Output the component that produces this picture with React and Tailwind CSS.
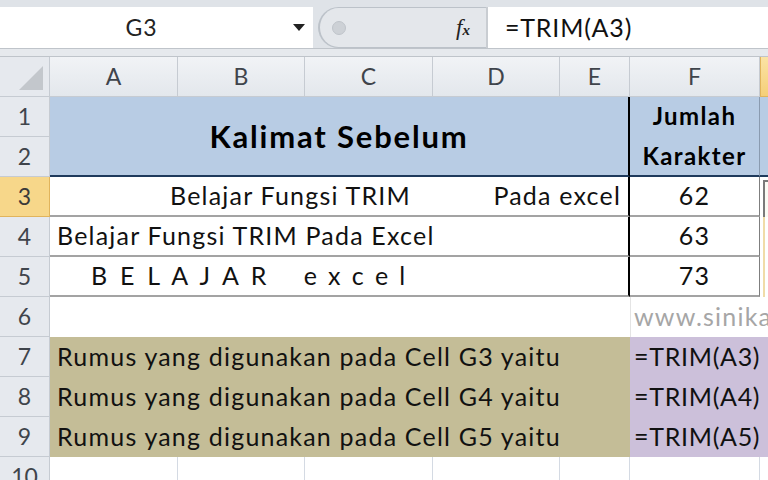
import React from "react";

const cell = "font-['Lato','Open_Sans',sans-serif]";

function RowHead({ n, active }) {
  return (
    <div
      className={
        active
          ? "flex items-center justify-center border-r border-b border-[#e1b45c] bg-[#f7d78a] text-[23px] text-[#3a3a3a]"
          : "flex items-center justify-center border-r border-b border-[#c6cbd2] bg-[#e6e9ee] text-[23px] text-[#3f444b]"
      }
    >
      {n}
    </div>
  );
}

function ColHead({ label, active }) {
  return (
    <div
      className={
        active
          ? "flex items-center justify-center border-l border-b border-[#e1b45c] bg-gradient-to-b from-[#fbe3a4] to-[#f5cf78]"
          : "flex items-center justify-center border-r border-b border-[#c6cbd2] bg-gradient-to-b from-[#f1f3f6] to-[#e3e7ec] text-[23px] text-[#3f444b]"
      }
    >
      {label}
    </div>
  );
}

export default function App() {
  return (
    <div className={`w-[768px] h-[480px] overflow-hidden bg-white ${cell}`}>
      {/* formula bar */}
      <div className="h-[57px] bg-[#dfe3e8] flex flex-col">
        <div className="h-[7px]" />
        <div className="h-[41px] flex">
          <div className="w-[313px] bg-white flex items-center relative">
            <span className="w-full text-center pr-[30px] text-[23px] tracking-[1px] text-[#222]">G3</span>
            <svg className="absolute left-[292px] top-[17px]" width="14" height="8" viewBox="0 0 14 8">
              <path d="M1 0 L13 0 L7 7 Z" fill="#222" />
            </svg>
          </div>
          <div className="w-[5px]" />
          <div className="w-[168px] flex items-center rounded-l-[22px] border-l-2 border-y border-[#bcc2c9] bg-[#e4e7eb]">
            <div className="ml-[12px] w-[14px] h-[14px] rounded-full bg-[#cdd1d6] border border-[#bfc4ca]" />
            <span className="ml-auto mr-[16px] font-['Liberation_Serif',serif] italic text-[23px] text-[#222] leading-none">
              f<span className="text-[15px] font-bold">x</span>
            </span>
          </div>
          <div className="w-[2px] bg-[#c9cdd2]" />
          <div className="flex-1 bg-white flex items-center pl-[17px] text-[25px] tracking-[0.8px] text-[#111]">=TRIM(A3)</div>
        </div>
        <div className="flex-1 border-t border-[#bfc4ca] border-b bg-[#e6e9ed]" />
      </div>

      {/* sheet */}
      <div className="grid grid-cols-[50px_128px_127px_128px_127px_70px_130px_1fr] grid-rows-[40px_repeat(10,40px)]">
        {/* column headers */}
        <div className="border-r border-b border-[#c6cbd2] bg-[#e6e9ee] flex items-end justify-end p-[6px]">
          <svg width="24" height="24" viewBox="0 0 24 24">
            <path d="M24 0 L24 24 L0 24 Z" fill="#c3c7cc" />
          </svg>
        </div>
        <ColHead label="A" />
        <ColHead label="B" />
        <ColHead label="C" />
        <ColHead label="D" />
        <ColHead label="E" />
        <ColHead label="F" />
        <ColHead label="" active />

        {/* rows 1-2 */}
        <RowHead n="1" />
        <div className="col-span-5 row-span-2 bg-[#b8cce4] border-r-2 border-r-black border-b-2 border-b-[#1f3a5c] flex items-center justify-center text-[31px] tracking-[1.8px] font-bold text-black">
          Kalimat Sebelum
        </div>
        <div className="row-span-2 bg-[#b8cce4] border-r border-r-[#8a9bb0] border-b-2 border-b-[#1f3a5c] flex flex-col items-center justify-center text-[24px] tracking-[1.4px] font-bold text-black leading-[40px]">
          <span>Jumlah</span>
          <span>Karakter</span>
        </div>
        <div className="row-span-2 bg-[#b8cce4] border-b-2 border-b-[#1f3a5c]" />
        <RowHead n="2" />

        {/* row 3 */}
        <RowHead n="3" active />
        <div className="col-span-5 border-r-2 border-r-black border-b-2 border-b-[#a3a3a3] flex items-center text-[25px] tracking-[1.2px] text-[#111] whitespace-pre">
          <span className="ml-[120px]">Belajar Fungsi TRIM</span>
          <span className="ml-auto mr-[7px]">Pada excel</span>
        </div>
        <div className="border-r border-r-[#7f7f7f] border-b-2 border-b-[#a3a3a3] flex items-center justify-center text-[25px] tracking-[1.2px] text-[#111]">62</div>
        <div className="border-l-2 border-t-2 border-[#7a7a7a] ml-[3px] mt-[3px] bg-[#fbfbf4]" />

        {/* row 4 */}
        <RowHead n="4" />
        <div className="col-span-5 border-r-2 border-r-black border-b-2 border-b-[#a3a3a3] flex items-center pl-[7px] text-[25px] tracking-[1.2px] text-[#111] whitespace-pre">
          Belajar Fungsi TRIM Pada Excel
        </div>
        <div className="border-r border-r-[#7f7f7f] border-b-2 border-b-[#a3a3a3] flex items-center justify-center text-[25px] tracking-[1.2px] text-[#111]">63</div>
        <div className="border-l-2 border-[#f0dca8] ml-[3px]" />

        {/* row 5 */}
        <RowHead n="5" />
        <div className="col-span-5 border-r-2 border-r-black border-b-2 border-b-[#a3a3a3] flex items-center text-[25px] text-[#111] whitespace-pre">
          <span className="ml-[41px] tracking-[3.2px]">B E L A J A R</span>
          <span className="ml-[34px] tracking-[2.4px]">e x c e l</span>
        </div>
        <div className="border-r border-r-[#7f7f7f] border-b-2 border-b-[#a3a3a3] flex items-center justify-center text-[25px] tracking-[1.2px] text-[#111]">73</div>
        <div className="border-l-2 border-[#f0dca8] ml-[3px]" />

        {/* row 6 */}
        <RowHead n="6" />
        <div className="col-span-5" />
        <div className="col-span-2 border-l border-[#e4e4e4] flex items-center pl-[3px] text-[25px] tracking-[1.2px] text-[#a6a6a6] whitespace-nowrap">
          www.sinika
        </div>

        {/* rows 7-9 */}
        {["G3", "G4", "G5"].map((g, i) => (
          <React.Fragment key={g}>
            <RowHead n={String(7 + i)} />
            <div className="col-span-5 bg-[#c4bd97] flex items-center pl-[7px] text-[25px] tracking-[1.2px] text-[#111] whitespace-pre">
              Rumus yang digunakan pada Cell {g} yaitu
            </div>
            <div className="col-span-2 bg-[#ccc0da] flex items-center pl-[4px] text-[25px] tracking-[0.7px] text-[#111] whitespace-nowrap">
              =TRIM(A{3 + i})
            </div>
          </React.Fragment>
        ))}

        {/* row 10 */}
        <RowHead n="10" />
        <div className="border-r border-b border-[#d4dae3]" />
        <div className="border-r border-b border-[#d4dae3]" />
        <div className="border-r border-b border-[#d4dae3]" />
        <div className="border-r border-b border-[#d4dae3]" />
        <div className="border-r border-b border-[#d4dae3]" />
        <div className="border-r border-b border-[#d4dae3]" />
        <div className="border-b border-[#d4dae3]" />
      </div>
    </div>
  );
}
